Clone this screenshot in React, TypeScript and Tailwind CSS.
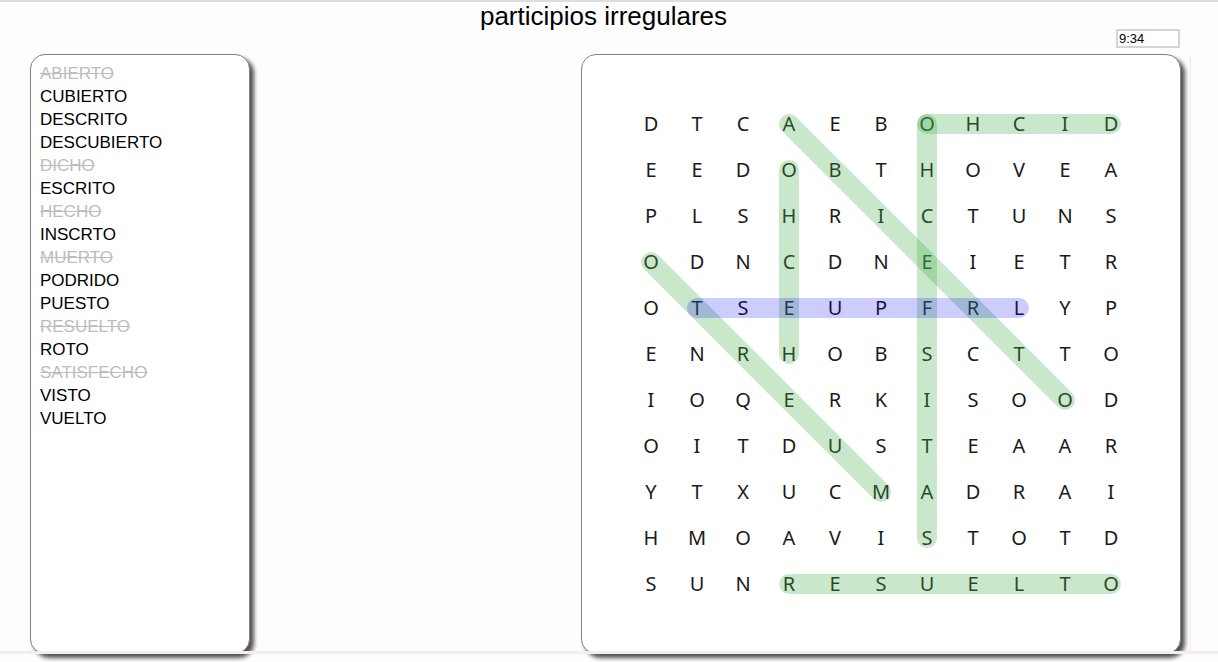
import React from "react";

const GRID = [
  "DTCAEBOHCID",
  "EEDOBTHOVEA",
  "PLSHRICTUNS",
  "ODNCDNEIETR",
  "OTSEUPFRLYP",
  "ENRHOBSCTTO",
  "IOQERKISOOD",
  "OITDUSTEAAR",
  "YTXUCMADRAI",
  "HMOAVISTOTD",
  "SUNRESUELTO",
];

const WORDS: { text: string; found: boolean }[] = [
  { text: "ABIERTO", found: true },
  { text: "CUBIERTO", found: false },
  { text: "DESCRITO", found: false },
  { text: "DESCUBIERTO", found: false },
  { text: "DICHO", found: true },
  { text: "ESCRITO", found: false },
  { text: "HECHO", found: true },
  { text: "INSCRTO", found: false },
  { text: "MUERTO", found: true },
  { text: "PODRIDO", found: false },
  { text: "PUESTO", found: false },
  { text: "RESUELTO", found: true },
  { text: "ROTO", found: false },
  { text: "SATISFECHO", found: true },
  { text: "VISTO", found: false },
  { text: "VUELTO", found: false },
];

const CELL = 46;

// [row, col] start -> end
const FOUND: [number, number, number, number][] = [
  [0, 3, 6, 9],
  [0, 10, 0, 6],
  [9, 6, 0, 6],
  [5, 3, 1, 3],
  [8, 5, 3, 0],
  [10, 3, 10, 10],
];

const SELECTING: [number, number, number, number] = [4, 1, 4, 8];

const c = (i: number) => i * CELL + CELL / 2;

function Panel({ className, children }: { className?: string; children: React.ReactNode }) {
  return (
    <div
      className={`h-[600px] rounded-[15px] border border-[#8a807a] bg-white shadow-[4px_4px_4px_#505050] ${className ?? ""}`}
    >
      {children}
    </div>
  );
}

export default function App() {
  return (
    <div className="relative h-[662px] w-[1218px] overflow-hidden border-t-2 border-[#dedede] bg-[#fdfdfd] font-['Liberation_Sans',Arial,sans-serif]">
      <h1 className="h-[27px] pr-[11px] text-center text-[26px] leading-[28px] text-black">participios irregulares</h1>

      <div className="flex justify-end pr-[38px]">
        <input
          readOnly
          value="9:34"
          className="h-[19px] w-[64px] border-2 border-[#d4d4d4] bg-white px-[1px] text-[13px] leading-[15px] text-black outline-none"
        />
      </div>

      <div className="mt-[6px] flex gap-[331px] pl-[30px]">
        <Panel className="w-[220px]">
          <ul className="pt-[7px] pl-[9px]">
            {WORDS.map((w) => (
              <li
                key={w.text}
                className={`text-[17px] leading-[23px] ${w.found ? "text-[#bdbdbd] line-through" : "text-black"}`}
              >
                {w.text}
              </li>
            ))}
          </ul>
        </Panel>

        <Panel className="flex w-[600px] items-center justify-center">
          <div className="relative">
            <div className="grid grid-cols-[repeat(11,46px)] grid-rows-[repeat(11,46px)] font-['Noto_Sans',sans-serif] text-[20px] text-[#1a1a1a]">
              {GRID.flatMap((row, r) =>
                row.split("").map((ch, col) => (
                  <div key={`${r}-${col}`} className="flex items-center justify-center">
                    {ch}
                  </div>
                )),
              )}
            </div>
            <svg className="pointer-events-none absolute inset-0" width={CELL * 11} height={CELL * 11}>
              {FOUND.map(([r1, c1, r2, c2], i) => (
                <line
                  key={i}
                  x1={c(c1)}
                  y1={c(r1)}
                  x2={c(c2)}
                  y2={c(r2)}
                  stroke="rgba(76,175,80,0.3)"
                  strokeWidth={20}
                  strokeLinecap="round"
                />
              ))}
              <line
                x1={c(SELECTING[1])}
                y1={c(SELECTING[0])}
                x2={c(SELECTING[3])}
                y2={c(SELECTING[2])}
                stroke="rgba(0,0,255,0.2)"
                strokeWidth={20}
                strokeLinecap="round"
              />
            </svg>
          </div>
        </Panel>
      </div>

      <div className="absolute top-[54px] left-[1190px] h-[596px] w-px bg-[#f4ebe4]" />
      <div className="absolute top-[649px] left-0 h-[3px] w-full bg-[#f6eee8]" />
    </div>
  );
}
